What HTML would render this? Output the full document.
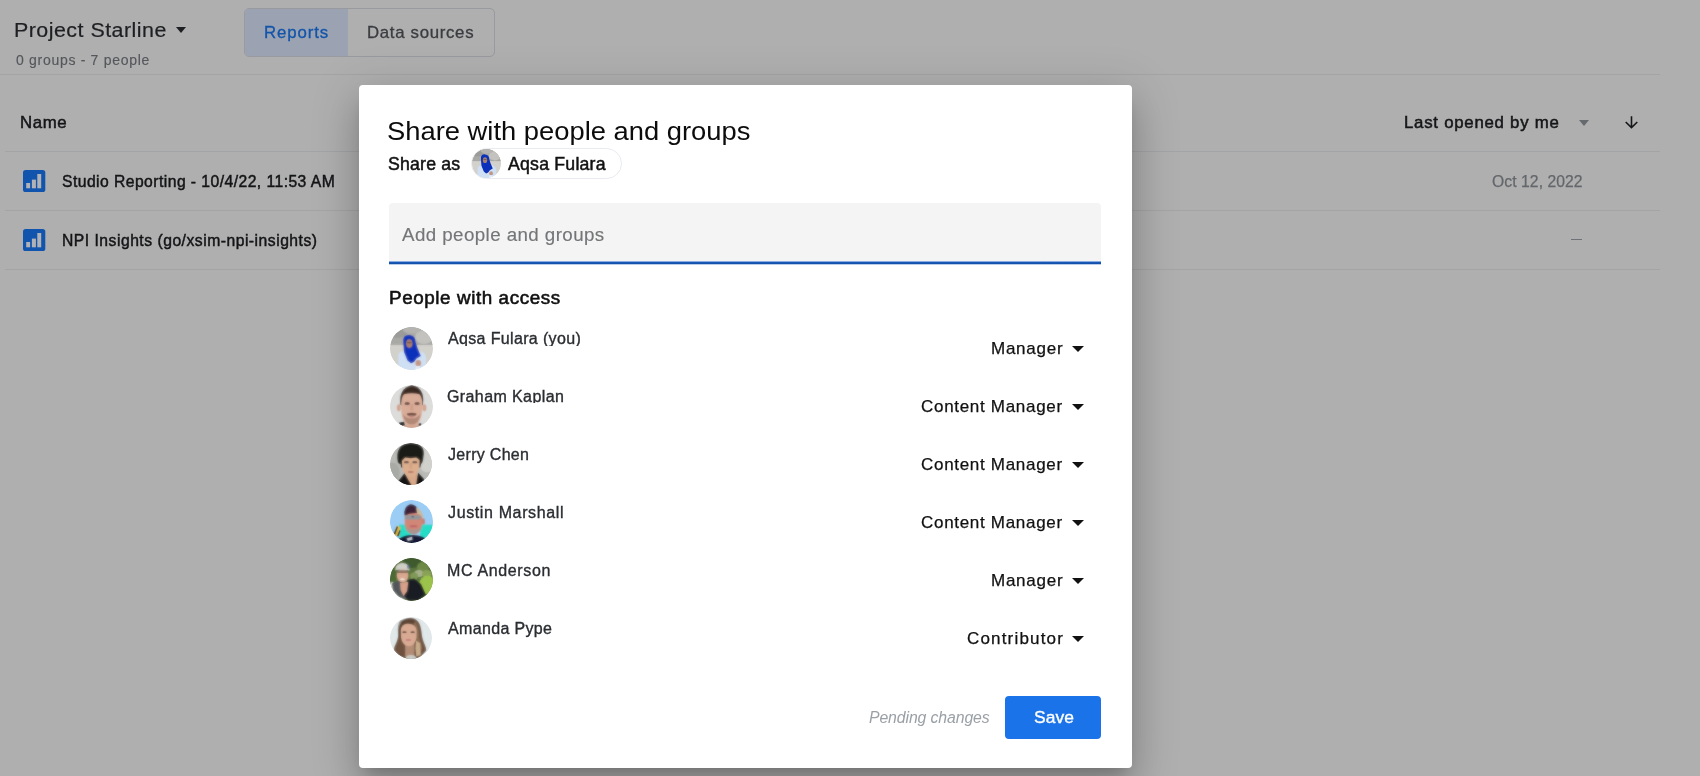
<!DOCTYPE html>
<html lang="en">
<head>
<meta charset="utf-8">
<title>Share with people and groups</title>
<style>
  html, body { margin: 0; padding: 0; }
  body {
    width: 1700px; height: 776px; overflow: hidden; position: relative;
    background: #afafaf;
    font-family: "Liberation Sans", sans-serif;
  }
  .t { position: absolute; white-space: nowrap; line-height: 1; will-change: transform; transform-origin: 0 50%; }
  .hline { position: absolute; height: 1px; background: #a3a4a6; left: 5px; width: 1655px; }
  .tri { position: absolute; width: 0; height: 0; border-left: 6px solid transparent; border-right: 6px solid transparent; border-top: 6px solid #111; }
  .ico { position: absolute; left: 22.9px; }
  #tabs { position: absolute; left: 244px; top: 8px; width: 248.5px; height: 46.6px; border: 1px solid #989a9f; border-radius: 5px; overflow: hidden; }
  #tab1 { position: absolute; left: 0; top: 0; width: 103px; height: 47px; background: #9ba3b2; }
  #dlg {
    position: absolute; left: 359px; top: 85px; width: 773px; height: 683px;
    background: #fff; border-radius: 4px;
    box-shadow: 0 11px 15px -7px rgba(0,0,0,.2), 0 24px 38px 3px rgba(0,0,0,.14), 0 9px 46px 8px rgba(0,0,0,.12);
  }
  #chip { position: absolute; left: 471px; top: 148px; width: 148.6px; height: 29px; border: 1px solid #e8ebf0; border-radius: 16px; }
  #inline { position: absolute; left: 389px; top: 261px; width: 712px; height: 4px; background: linear-gradient(to bottom, rgba(21,84,178,0) 0px, #2a6bc9 0.9px, #1554b2 1.6px, #134fa9 3px, rgba(21,84,178,0) 3.7px); }
  #input { position: absolute; left: 389px; top: 203px; width: 712px; height: 58px; background: #f4f4f4; border-radius: 4px 4px 0 0; }
  .av { position: absolute; border-radius: 50%; overflow: hidden; }
  #save { position: absolute; left: 1005.3px; top: 695.7px; width: 96.1px; height: 43.1px; background: #1a73e8; border-radius: 4px; }
</style>
</head>
<body>

<!-- background page (dimmed by scrim) -->

<div class="t" id="proj" style="left:14px;top:20px;font-size:20px;letter-spacing:0.45px;color:#1d1f22;-webkit-text-stroke:0.2px #1d1f22;transform:scaleX(1.07);">Project Starline</div>
<div class="tri" style="left:175.6px;top:27.3px;border-left-width:5.6px;border-right-width:5.6px;border-top:6.6px solid #1d1f22;"></div>
<div class="t" id="projsub" style="left:16px;top:53px;font-size:14px;letter-spacing:0.7px;color:#54575b;-webkit-text-stroke:0.15px #54575b;">0 groups - 7 people</div>
<div id="tabs"><div id="tab1"></div></div>
<div class="t" id="tab1t" style="left:264px;top:25px;font-size:15.7px;letter-spacing:0.85px;color:#1254aa;-webkit-text-stroke:0.3px #1254aa;transform:scaleX(1.07);">Reports</div>
<div class="t" id="tab2t" style="left:367px;top:25px;font-size:15.7px;letter-spacing:0.65px;color:#3a3c40;-webkit-text-stroke:0.3px #3a3c40;transform:scaleX(1.07);">Data sources</div>
<div class="hline" style="top:74px;left:0;width:1660px;"></div>
<div class="t" id="thname" style="left:20px;top:115px;font-size:15.7px;letter-spacing:0.6px;color:#151618;-webkit-text-stroke:0.5px #151618;transform:scaleX(1.07);">Name</div>
<div class="t" id="thlast" style="left:1404px;top:115px;font-size:15.7px;letter-spacing:0.7px;color:#151618;-webkit-text-stroke:0.5px #151618;transform:scaleX(1.07);">Last opened by me</div>
<div class="tri" style="left:1578.6px;top:119.9px;border-left-width:5.5px;border-right-width:5.5px;border-top:6.2px solid #66696d;"></div>
<svg style="position:absolute;left:1621.7px;top:113px" width="19" height="19" viewBox="0 0 24 24"><path d="M20 12l-1.41-1.41L13 16.17V4h-2v12.17l-5.58-5.59L4 12l8 8 8-8z" fill="#151618"/></svg>
<div class="hline" style="top:151px;"></div>
<div class="hline" style="top:210px;"></div>
<div class="hline" style="top:269px;"></div>
<svg class="ico" style="top:169.8px" width="23" height="23" viewBox="0 0 23 23"><rect x="0" y="0" width="22.3" height="22.1" rx="2.6" fill="#1154ae"/><rect x="3.2" y="13" width="3.9" height="5.3" fill="#b1b2b5"/><rect x="8.9" y="9.6" width="4" height="8.7" fill="#b1b2b5"/><rect x="14.3" y="4" width="3.9" height="14.3" fill="#b1b2b5"/></svg>
<div class="t" id="row1t" style="left:62px;top:174px;font-size:15.7px;letter-spacing:0.45px;color:#131416;-webkit-text-stroke:0.45px #131416;">Studio Reporting - 10/4/22, 11:53 AM</div>
<div class="t" id="date1" style="left:1492px;top:174px;font-size:15.7px;letter-spacing:0.07px;color:#63676b;-webkit-text-stroke:0.25px #63676b;">Oct 12, 2022</div>
<svg class="ico" style="top:228.8px" width="23" height="23" viewBox="0 0 23 23"><rect x="0" y="0" width="22.3" height="22.1" rx="2.6" fill="#1154ae"/><rect x="3.2" y="13" width="3.9" height="5.3" fill="#b1b2b5"/><rect x="8.9" y="9.6" width="4" height="8.7" fill="#b1b2b5"/><rect x="14.3" y="4" width="3.9" height="14.3" fill="#b1b2b5"/></svg>
<div class="t" id="row2t" style="left:62px;top:233px;font-size:15.7px;letter-spacing:0.5px;color:#131416;-webkit-text-stroke:0.45px #131416;">NPI Insights (go/xsim-npi-insights)</div>
<div style="position:absolute;left:1571.2px;top:238.7px;width:10.8px;height:1.7px;background:#6f7276;"></div>

<!-- dialog -->
<div id="dlg"></div>
<div class="t" id="title" style="left:387px;top:118px;font-size:26px;letter-spacing:0.0px;color:#0c0c0d;transform:scaleX(1.052);">Share with people and groups</div>
<div class="t" id="shareas" style="left:388px;top:156px;font-size:17.7px;letter-spacing:0.2px;color:#111;-webkit-text-stroke:0.5px #111;">Share as</div>
<div id="chip"></div>
<div class="t" id="chipname" style="left:508px;top:156px;font-size:17.7px;letter-spacing:0.22px;color:#111;-webkit-text-stroke:0.5px #111;">Aqsa Fulara</div>
<div id="input"></div><div id="inline"></div>
<div class="t" id="ph" style="left:402px;top:227px;font-size:17.5px;letter-spacing:0.4px;color:#737577;-webkit-text-stroke:0.15px #737577;transform:scaleX(1.07);">Add people and groups</div>
<div class="t" id="pwa" style="left:389px;top:290px;font-size:17.6px;letter-spacing:0.55px;color:#111;-webkit-text-stroke:0.55px #111;transform:scaleX(1.07);">People with access</div>
<div class="t" id="nm1" style="left:448px;top:331px;font-size:16px;letter-spacing:0.35px;color:#2a2d31;-webkit-text-stroke:0.35px #2a2d31;height:15px;overflow:hidden;">Aqsa Fulara (you)</div>
<div class="t" id="role1" style="left:991px;top:341px;font-size:15.9px;letter-spacing:0.7px;color:#111;-webkit-text-stroke:0.25px #111;transform:scaleX(1.07);">Manager</div>
<div class="tri" style="left:1072px;top:346px;border-left-width:6.0px;border-right-width:6.0px;border-top:6px solid #111;"></div>
<div class="t" id="nm2" style="left:447px;top:389px;font-size:16px;letter-spacing:0.4px;color:#2a2d31;-webkit-text-stroke:0.35px #2a2d31;height:14px;overflow:hidden;">Graham Kaplan</div>
<div class="t" id="role2" style="left:921px;top:399px;font-size:15.9px;letter-spacing:0.65px;color:#111;-webkit-text-stroke:0.25px #111;transform:scaleX(1.07);">Content Manager</div>
<div class="tri" style="left:1072px;top:404px;border-left-width:6.0px;border-right-width:6.0px;border-top:6px solid #111;"></div>
<div class="t" id="nm3" style="left:448px;top:447px;font-size:16px;letter-spacing:0.3px;color:#2a2d31;-webkit-text-stroke:0.35px #2a2d31;">Jerry Chen</div>
<div class="t" id="role3" style="left:921px;top:457px;font-size:15.9px;letter-spacing:0.65px;color:#111;-webkit-text-stroke:0.25px #111;transform:scaleX(1.07);">Content Manager</div>
<div class="tri" style="left:1072px;top:462px;border-left-width:6.0px;border-right-width:6.0px;border-top:6px solid #111;"></div>
<div class="t" id="nm4" style="left:448px;top:505px;font-size:16px;letter-spacing:0.63px;color:#2a2d31;-webkit-text-stroke:0.35px #2a2d31;">Justin Marshall</div>
<div class="t" id="role4" style="left:921px;top:515px;font-size:15.9px;letter-spacing:0.65px;color:#111;-webkit-text-stroke:0.25px #111;transform:scaleX(1.07);">Content Manager</div>
<div class="tri" style="left:1072px;top:520px;border-left-width:6.0px;border-right-width:6.0px;border-top:6px solid #111;"></div>
<div class="t" id="nm5" style="left:447px;top:563px;font-size:16px;letter-spacing:0.65px;color:#2a2d31;-webkit-text-stroke:0.35px #2a2d31;">MC Anderson</div>
<div class="t" id="role5" style="left:991px;top:573px;font-size:15.9px;letter-spacing:0.7px;color:#111;-webkit-text-stroke:0.25px #111;transform:scaleX(1.07);">Manager</div>
<div class="tri" style="left:1072px;top:578px;border-left-width:6.0px;border-right-width:6.0px;border-top:6px solid #111;"></div>
<div class="t" id="nm6" style="left:448px;top:621px;font-size:16px;letter-spacing:0.35px;color:#2a2d31;-webkit-text-stroke:0.35px #2a2d31;">Amanda Pype</div>
<div class="t" id="role6" style="left:967px;top:631px;font-size:15.9px;letter-spacing:1.1px;color:#111;-webkit-text-stroke:0.25px #111;transform:scaleX(1.07);">Contributor</div>
<div class="tri" style="left:1072px;top:636px;border-left-width:6.0px;border-right-width:6.0px;border-top:6px solid #111;"></div>
<svg class="av" id="av1" style="left:389.6px;top:326.9px" width="43" height="43" viewBox="0 0 43 43">
<defs><clipPath id="c1"><circle cx="21.5" cy="21.5" r="21.5"/></clipPath><filter id="b1" x="-10%" y="-10%" width="120%" height="120%"><feGaussianBlur stdDeviation="0.85"/></filter></defs>
<g clip-path="url(#c1)"><g>
<rect x="-3" y="-3" width="49" height="49" fill="#d3d1cb"/>
<rect x="-3" y="-3" width="49" height="21" fill="#a9a9a6"/>
<ellipse cx="34" cy="10" rx="9" ry="7" fill="#c3c2be"/>
<ellipse cx="8" cy="6" rx="9" ry="5" fill="#9b9b99"/>
<ellipse cx="22" cy="3" rx="9" ry="3.5" fill="#b4b3b0"/>
<path d="M8 46 L8.3 28 Q9.5 24.5 14 24 L30 24 Q35.5 25.5 36 31 L36.5 46 Z" fill="#d0e0f4"/>
<path d="M13.3 15 Q12.5 7.5 19.5 8 Q25.5 8.5 25.5 15 L27.5 21 L30.8 29 L26.5 31.5 L24 35 L21 36.2 L17.5 33.5 L14 25 Z" fill="#0b30bb"/>
<ellipse cx="19.3" cy="16.6" rx="3.2" ry="4.3" fill="#a8806d"/>
<ellipse cx="19.3" cy="15.6" rx="2.6" ry=".8" fill="#5e4438" opacity=".7"/>
<ellipse cx="28.3" cy="36.2" rx="2.8" ry="3.2" fill="#c29782"/>
<path d="M26 39 L30 39 L30 46 L25 46 Z" fill="#e6eefa"/>
</g><g filter="url(#b1)" opacity="0.6">
<rect x="-3" y="-3" width="49" height="49" fill="#d3d1cb"/>
<rect x="-3" y="-3" width="49" height="21" fill="#a9a9a6"/>
<ellipse cx="34" cy="10" rx="9" ry="7" fill="#c3c2be"/>
<ellipse cx="8" cy="6" rx="9" ry="5" fill="#9b9b99"/>
<ellipse cx="22" cy="3" rx="9" ry="3.5" fill="#b4b3b0"/>
<path d="M8 46 L8.3 28 Q9.5 24.5 14 24 L30 24 Q35.5 25.5 36 31 L36.5 46 Z" fill="#d0e0f4"/>
<path d="M13.3 15 Q12.5 7.5 19.5 8 Q25.5 8.5 25.5 15 L27.5 21 L30.8 29 L26.5 31.5 L24 35 L21 36.2 L17.5 33.5 L14 25 Z" fill="#0b30bb"/>
<ellipse cx="19.3" cy="16.6" rx="3.2" ry="4.3" fill="#a8806d"/>
<ellipse cx="19.3" cy="15.6" rx="2.6" ry=".8" fill="#5e4438" opacity=".7"/>
<ellipse cx="28.3" cy="36.2" rx="2.8" ry="3.2" fill="#c29782"/>
<path d="M26 39 L30 39 L30 46 L25 46 Z" fill="#e6eefa"/>
</g></g></svg>
<svg class="av" id="av2" style="left:389.6px;top:384.9px" width="43" height="43" viewBox="0 0 43 43">
<defs><clipPath id="c2"><circle cx="21.5" cy="21.5" r="21.5"/></clipPath><filter id="b2" x="-10%" y="-10%" width="120%" height="120%"><feGaussianBlur stdDeviation="0.85"/></filter></defs>
<g clip-path="url(#c2)"><g>
<rect x="-3" y="-3" width="49" height="49" fill="#dcdddb"/>
<path d="M10.4 19.5 Q8.5 3 21.7 0.3 Q35 2.5 33 19.5 L31.5 21 L12 21 Z" fill="#3a2a22"/>
<ellipse cx="8.8" cy="22.8" rx="2" ry="3.5" fill="#d2a48f"/>
<ellipse cx="34.4" cy="22.8" rx="2" ry="3.5" fill="#d2a48f"/>
<path d="M11.2 18 Q11.5 12 14 9.3 Q21.6 7 29.5 9.3 Q32 12 32.4 18 L32 27 Q31 36 26.5 40.5 L17 40.5 Q12 36 11.3 27 Z" fill="#d9ac98"/>
<path d="M12.8 29 Q14.5 38.8 21.7 40 Q29 38.8 30.6 29 Q27 33.5 21.7 33.5 Q16 33.5 12.8 29 Z" fill="#a98170" opacity=".85"/>
<ellipse cx="17.2" cy="18.6" rx="2.7" ry="1.5" fill="#6b4d43"/>
<ellipse cx="27.1" cy="18.6" rx="2.7" ry="1.5" fill="#6b4d43"/>
<path d="M20.8 19 L22.8 19 L23.6 25.5 L20 25.5 Z" fill="#cf9f8b"/>
<ellipse cx="21.7" cy="29.3" rx="4.8" ry="1.5" fill="#6d4b40"/>
<ellipse cx="21.7" cy="31.6" rx="2.8" ry="1.1" fill="#c98a82"/>
<path d="M15 39.5 L28.5 39.5 L31 46 L12 46 Z" fill="#d4a793"/>
<path d="M9.2 37.6 L14 36.8 L15 40.2 L9.8 41.6 Z" fill="#1c1c1c"/>
<path d="M28.7 38.6 L31.2 38.2 L31.2 40.6 L28.7 40.8 Z" fill="#1c1c1c"/>
</g><g filter="url(#b2)" opacity="0.6">
<rect x="-3" y="-3" width="49" height="49" fill="#dcdddb"/>
<path d="M10.4 19.5 Q8.5 3 21.7 0.3 Q35 2.5 33 19.5 L31.5 21 L12 21 Z" fill="#3a2a22"/>
<ellipse cx="8.8" cy="22.8" rx="2" ry="3.5" fill="#d2a48f"/>
<ellipse cx="34.4" cy="22.8" rx="2" ry="3.5" fill="#d2a48f"/>
<path d="M11.2 18 Q11.5 12 14 9.3 Q21.6 7 29.5 9.3 Q32 12 32.4 18 L32 27 Q31 36 26.5 40.5 L17 40.5 Q12 36 11.3 27 Z" fill="#d9ac98"/>
<path d="M12.8 29 Q14.5 38.8 21.7 40 Q29 38.8 30.6 29 Q27 33.5 21.7 33.5 Q16 33.5 12.8 29 Z" fill="#a98170" opacity=".85"/>
<ellipse cx="17.2" cy="18.6" rx="2.7" ry="1.5" fill="#6b4d43"/>
<ellipse cx="27.1" cy="18.6" rx="2.7" ry="1.5" fill="#6b4d43"/>
<path d="M20.8 19 L22.8 19 L23.6 25.5 L20 25.5 Z" fill="#cf9f8b"/>
<ellipse cx="21.7" cy="29.3" rx="4.8" ry="1.5" fill="#6d4b40"/>
<ellipse cx="21.7" cy="31.6" rx="2.8" ry="1.1" fill="#c98a82"/>
<path d="M15 39.5 L28.5 39.5 L31 46 L12 46 Z" fill="#d4a793"/>
<path d="M9.2 37.6 L14 36.8 L15 40.2 L9.8 41.6 Z" fill="#1c1c1c"/>
<path d="M28.7 38.6 L31.2 38.2 L31.2 40.6 L28.7 40.8 Z" fill="#1c1c1c"/>
</g></g></svg>
<svg class="av" id="av3" style="left:390.1px;top:442.7px" width="42" height="42" viewBox="0 0 43 43">
<defs><clipPath id="c3"><circle cx="21.5" cy="21.5" r="21.5"/></clipPath><filter id="b3" x="-10%" y="-10%" width="120%" height="120%"><feGaussianBlur stdDeviation="0.85"/></filter></defs>
<g clip-path="url(#c3)"><g>
<rect x="-3" y="-3" width="49" height="49" fill="#b9bab6"/>
<ellipse cx="38" cy="14" rx="10" ry="16" fill="#d0d0cd"/>
<ellipse cx="3" cy="30" rx="7" ry="10" fill="#a9aaa6"/>
<rect x="17" y="30" width="11" height="16" fill="#d8a889"/>
<path d="M7.5 46 L8.8 38.5 L14.8 31 L21.8 43 L21.8 46 Z" fill="#121312"/>
<path d="M28.8 30.5 L34.8 36.8 L34 46 L26.5 46 L27.5 38 Z" fill="#121312"/>
<path d="M8 19.5 Q4.5 1.5 21 0 Q37 0.5 34.2 14 Q34 19.5 31.8 21.5 L31 25 L11.5 25 L10.8 21.5 Q8.6 21.5 8 19.5 Z" fill="#1a1c19"/>
<path d="M12.2 18 Q12.5 13.5 21.3 14.2 Q30 13.5 30.4 18 L30.2 24 Q29.3 31 24.5 34 Q21.3 35.2 18 34 Q13.2 31 12.4 24 Z" fill="#dcae8e"/>
<path d="M12 18.5 L13.5 11.5 L20 10.5 L27 10.8 L30.8 18 L27 14.8 L21 15.6 L15.5 14.8 Z" fill="#1a1c19"/>
<ellipse cx="16.8" cy="19.6" rx="2.6" ry="1.2" fill="#6a5246"/>
<ellipse cx="25.4" cy="19.6" rx="2.6" ry="1.2" fill="#6a5246"/>
<path d="M20.3 20 L22.2 20 L23 26 L19.6 26 Z" fill="#d2a283"/>
<ellipse cx="21.2" cy="29.6" rx="3.1" ry="1" fill="#b9776a"/>
</g><g filter="url(#b3)" opacity="0.6">
<rect x="-3" y="-3" width="49" height="49" fill="#b9bab6"/>
<ellipse cx="38" cy="14" rx="10" ry="16" fill="#d0d0cd"/>
<ellipse cx="3" cy="30" rx="7" ry="10" fill="#a9aaa6"/>
<rect x="17" y="30" width="11" height="16" fill="#d8a889"/>
<path d="M7.5 46 L8.8 38.5 L14.8 31 L21.8 43 L21.8 46 Z" fill="#121312"/>
<path d="M28.8 30.5 L34.8 36.8 L34 46 L26.5 46 L27.5 38 Z" fill="#121312"/>
<path d="M8 19.5 Q4.5 1.5 21 0 Q37 0.5 34.2 14 Q34 19.5 31.8 21.5 L31 25 L11.5 25 L10.8 21.5 Q8.6 21.5 8 19.5 Z" fill="#1a1c19"/>
<path d="M12.2 18 Q12.5 13.5 21.3 14.2 Q30 13.5 30.4 18 L30.2 24 Q29.3 31 24.5 34 Q21.3 35.2 18 34 Q13.2 31 12.4 24 Z" fill="#dcae8e"/>
<path d="M12 18.5 L13.5 11.5 L20 10.5 L27 10.8 L30.8 18 L27 14.8 L21 15.6 L15.5 14.8 Z" fill="#1a1c19"/>
<ellipse cx="16.8" cy="19.6" rx="2.6" ry="1.2" fill="#6a5246"/>
<ellipse cx="25.4" cy="19.6" rx="2.6" ry="1.2" fill="#6a5246"/>
<path d="M20.3 20 L22.2 20 L23 26 L19.6 26 Z" fill="#d2a283"/>
<ellipse cx="21.2" cy="29.6" rx="3.1" ry="1" fill="#b9776a"/>
</g></g></svg>
<svg class="av" id="av4" style="left:389.6px;top:500.2px" width="43" height="43" viewBox="0 0 43 43">
<defs><clipPath id="c4"><circle cx="21.5" cy="21.5" r="21.5"/></clipPath><filter id="b4" x="-10%" y="-10%" width="120%" height="120%"><feGaussianBlur stdDeviation="0.85"/></filter></defs>
<g clip-path="url(#c4)"><g>
<rect x="-3" y="-3" width="49" height="49" fill="#9ccdf5"/>
<rect x="9" y="24.6" width="12" height="13" fill="#27dcc7"/>
<rect x="30" y="24.6" width="16" height="13" fill="#27dcc7"/>
<path d="M3 36 L6.5 26 L10.5 26.5 L9.5 36 Z" fill="#e3b840"/>
<path d="M3.5 34 L6.8 26.5 L8 26.8 L5.2 34.5 Z" fill="#1b1b1b"/>
<path d="M7 36 L9.5 30 L10.5 31 L8.5 36.5 Z" fill="#1b1b1b"/>
<ellipse cx="22.5" cy="45" rx="17.5" ry="10" fill="#171b35"/>
<path d="M16.5 38.5 L22 36.8 L22.5 39.5 L18 41 Z" fill="#c8c9d6"/>
<ellipse cx="33.3" cy="21.5" rx="1.6" ry="3.2" fill="#c67e6e"/>
<path d="M14.6 16 Q14.6 11 23.5 11 Q32.4 11 32.4 16 L32.2 25 Q31 34 23.6 34.2 Q16 34 14.8 25 Z" fill="#d18777"/>
<path d="M16 26 Q18 34.4 23.6 34.4 Q29.5 34.4 31.3 26 Q28 30 23.6 29.5 Q19 30 16 26 Z" fill="#a59892" opacity=".85"/>
<ellipse cx="23.5" cy="26.3" rx="4" ry="1.2" fill="#c0696a"/>
<path d="M14.6 15.5 Q13 7 20 4.3 Q25 4.5 27.5 8 L27.5 13 Q20 12.5 14.6 15.5 Z" fill="#3c2238"/>
<path d="M26 7.3 Q31.5 8.5 33.2 16.5 L33.5 19 L30 15 L27 13.5 Z" fill="#c9b99f"/>
<rect x="15" y="15.2" width="15.8" height="4.2" rx="1.5" fill="#8b979d" opacity=".92"/>
<rect x="21.7" y="16" width="2" height="1.3" fill="#4d5a66"/>
</g><g filter="url(#b4)" opacity="0.6">
<rect x="-3" y="-3" width="49" height="49" fill="#9ccdf5"/>
<rect x="9" y="24.6" width="12" height="13" fill="#27dcc7"/>
<rect x="30" y="24.6" width="16" height="13" fill="#27dcc7"/>
<path d="M3 36 L6.5 26 L10.5 26.5 L9.5 36 Z" fill="#e3b840"/>
<path d="M3.5 34 L6.8 26.5 L8 26.8 L5.2 34.5 Z" fill="#1b1b1b"/>
<path d="M7 36 L9.5 30 L10.5 31 L8.5 36.5 Z" fill="#1b1b1b"/>
<ellipse cx="22.5" cy="45" rx="17.5" ry="10" fill="#171b35"/>
<path d="M16.5 38.5 L22 36.8 L22.5 39.5 L18 41 Z" fill="#c8c9d6"/>
<ellipse cx="33.3" cy="21.5" rx="1.6" ry="3.2" fill="#c67e6e"/>
<path d="M14.6 16 Q14.6 11 23.5 11 Q32.4 11 32.4 16 L32.2 25 Q31 34 23.6 34.2 Q16 34 14.8 25 Z" fill="#d18777"/>
<path d="M16 26 Q18 34.4 23.6 34.4 Q29.5 34.4 31.3 26 Q28 30 23.6 29.5 Q19 30 16 26 Z" fill="#a59892" opacity=".85"/>
<ellipse cx="23.5" cy="26.3" rx="4" ry="1.2" fill="#c0696a"/>
<path d="M14.6 15.5 Q13 7 20 4.3 Q25 4.5 27.5 8 L27.5 13 Q20 12.5 14.6 15.5 Z" fill="#3c2238"/>
<path d="M26 7.3 Q31.5 8.5 33.2 16.5 L33.5 19 L30 15 L27 13.5 Z" fill="#c9b99f"/>
<rect x="15" y="15.2" width="15.8" height="4.2" rx="1.5" fill="#8b979d" opacity=".92"/>
<rect x="21.7" y="16" width="2" height="1.3" fill="#4d5a66"/>
</g></g></svg>
<svg class="av" id="av5" style="left:389.6px;top:558.1px" width="43" height="43" viewBox="0 0 43 43">
<defs><clipPath id="c5"><circle cx="21.5" cy="21.5" r="21.5"/></clipPath><filter id="b5" x="-10%" y="-10%" width="120%" height="120%"><feGaussianBlur stdDeviation="0.85"/></filter></defs>
<g clip-path="url(#c5)"><g>
<rect x="-3" y="-3" width="49" height="49" fill="#5b753f"/>
<ellipse cx="22" cy="4" rx="9" ry="6" fill="#3f5a2f"/>
<ellipse cx="33" cy="9" rx="6" ry="5" fill="#6f8a48"/>
<ellipse cx="29" cy="15.5" rx="5" ry="3.5" fill="#a7b08a"/>
<ellipse cx="37" cy="16" rx="5" ry="4" fill="#89a257"/>
<ellipse cx="37.5" cy="27" rx="8.5" ry="9.5" fill="#9cc24b"/>
<ellipse cx="24" cy="18" rx="4" ry="3.5" fill="#7f9a58"/>
<ellipse cx="2" cy="18" rx="4.5" ry="8" fill="#4d6b35"/>
<path d="M-3 25 L3 24 L6 34 L14 41 L20 46 L-3 46 Z" fill="#dadad6"/>
<path d="M1.8 25.5 L8 22.8 L14 24 L17 42 L8.5 38.5 L3.2 32.5 Z" fill="#53575a"/>
<path d="M17.5 22 L24 20.5 L31 26 L35.8 36.5 L28 42.5 L18 42.5 L14 37 Z" fill="#1b1f25"/>
<path d="M10 25 L18.3 23.8 L17.2 33 L13.6 38.2 L10.6 32 Z" fill="#d6a08b"/>
<ellipse cx="12.6" cy="17.5" rx="5.8" ry="7" fill="#d9a88f"/>
<ellipse cx="12.4" cy="21.3" rx="2.4" ry="1" fill="#f1e7e1"/>

<path d="M5.3 12 Q5.5 5 12.5 5 Q19.5 5.2 19.6 12.6 L12 11.5 Z" fill="#d0d0c7"/>
<ellipse cx="18.4" cy="8.8" rx="1.4" ry="2.2" fill="#5b6a8a" opacity=".7"/>
<rect x="7.2" y="12.4" width="10.6" height="2.6" fill="#6b5a4e" opacity=".75"/>
</g><g filter="url(#b5)" opacity="0.6">
<rect x="-3" y="-3" width="49" height="49" fill="#5b753f"/>
<ellipse cx="22" cy="4" rx="9" ry="6" fill="#3f5a2f"/>
<ellipse cx="33" cy="9" rx="6" ry="5" fill="#6f8a48"/>
<ellipse cx="29" cy="15.5" rx="5" ry="3.5" fill="#a7b08a"/>
<ellipse cx="37" cy="16" rx="5" ry="4" fill="#89a257"/>
<ellipse cx="37.5" cy="27" rx="8.5" ry="9.5" fill="#9cc24b"/>
<ellipse cx="24" cy="18" rx="4" ry="3.5" fill="#7f9a58"/>
<ellipse cx="2" cy="18" rx="4.5" ry="8" fill="#4d6b35"/>
<path d="M-3 25 L3 24 L6 34 L14 41 L20 46 L-3 46 Z" fill="#dadad6"/>
<path d="M1.8 25.5 L8 22.8 L14 24 L17 42 L8.5 38.5 L3.2 32.5 Z" fill="#53575a"/>
<path d="M17.5 22 L24 20.5 L31 26 L35.8 36.5 L28 42.5 L18 42.5 L14 37 Z" fill="#1b1f25"/>
<path d="M10 25 L18.3 23.8 L17.2 33 L13.6 38.2 L10.6 32 Z" fill="#d6a08b"/>
<ellipse cx="12.6" cy="17.5" rx="5.8" ry="7" fill="#d9a88f"/>
<ellipse cx="12.4" cy="21.3" rx="2.4" ry="1" fill="#f1e7e1"/>

<path d="M5.3 12 Q5.5 5 12.5 5 Q19.5 5.2 19.6 12.6 L12 11.5 Z" fill="#d0d0c7"/>
<ellipse cx="18.4" cy="8.8" rx="1.4" ry="2.2" fill="#5b6a8a" opacity=".7"/>
<rect x="7.2" y="12.4" width="10.6" height="2.6" fill="#6b5a4e" opacity=".75"/>
</g></g></svg>
<svg class="av" id="av6" style="left:390.1px;top:616.9px" width="42" height="42" viewBox="0 0 43 43">
<defs><clipPath id="c6"><circle cx="21.5" cy="21.5" r="21.5"/></clipPath><filter id="b6" x="-10%" y="-10%" width="120%" height="120%"><feGaussianBlur stdDeviation="0.85"/></filter></defs>
<g clip-path="url(#c6)"><g>
<rect x="-3" y="-3" width="49" height="49" fill="#e2e8e9"/>
<path d="M20.5 1 C11 1 8.7 10 8.6 17 C8.4 26 3.2 30 4.3 34.5 L9.5 40.5 L18 43.5 L26 43.5 L31.5 40.5 L37 34.5 C37.5 30 33.2 26 32.5 17 C31.5 8 29.5 1 20.5 1 Z" fill="#6e523f"/>
<path d="M24 3 C29 6 30 14 30.5 22 L33 31 L31 39 L27 40 L27 24 Z" fill="#8a6c54"/>
<ellipse cx="12" cy="13" rx="4" ry="10" fill="#4d382b" opacity=".55"/>
<ellipse cx="19" cy="4.5" rx="7" ry="3" fill="#4d382b" opacity=".5"/>
<path d="M26.6 24 L31 27 L31.4 39 L27 40.5 L26 32 Z" fill="#c8ac8b"/>
<rect x="15.5" y="27" width="9.5" height="14" fill="#b38c77"/>
<ellipse cx="21.5" cy="42" rx="5.3" ry="3.2" fill="#c9cbc4"/>
<path d="M11 14 Q11.5 6.5 18.5 6.8 Q26.5 7 27.3 14 L27.2 21 Q26 29 19.3 30 Q12.5 29 11.2 21 Z" fill="#d9ab93"/>
<ellipse cx="14.8" cy="15.5" rx="2.2" ry=".9" fill="#5b463c"/>
<ellipse cx="23.2" cy="15.5" rx="2.2" ry=".9" fill="#5b463c"/>
<ellipse cx="18.8" cy="23.6" rx="3.1" ry="1" fill="#c47f80"/>
</g><g filter="url(#b6)" opacity="0.6">
<rect x="-3" y="-3" width="49" height="49" fill="#e2e8e9"/>
<path d="M20.5 1 C11 1 8.7 10 8.6 17 C8.4 26 3.2 30 4.3 34.5 L9.5 40.5 L18 43.5 L26 43.5 L31.5 40.5 L37 34.5 C37.5 30 33.2 26 32.5 17 C31.5 8 29.5 1 20.5 1 Z" fill="#6e523f"/>
<path d="M24 3 C29 6 30 14 30.5 22 L33 31 L31 39 L27 40 L27 24 Z" fill="#8a6c54"/>
<ellipse cx="12" cy="13" rx="4" ry="10" fill="#4d382b" opacity=".55"/>
<ellipse cx="19" cy="4.5" rx="7" ry="3" fill="#4d382b" opacity=".5"/>
<path d="M26.6 24 L31 27 L31.4 39 L27 40.5 L26 32 Z" fill="#c8ac8b"/>
<rect x="15.5" y="27" width="9.5" height="14" fill="#b38c77"/>
<ellipse cx="21.5" cy="42" rx="5.3" ry="3.2" fill="#c9cbc4"/>
<path d="M11 14 Q11.5 6.5 18.5 6.8 Q26.5 7 27.3 14 L27.2 21 Q26 29 19.3 30 Q12.5 29 11.2 21 Z" fill="#d9ab93"/>
<ellipse cx="14.8" cy="15.5" rx="2.2" ry=".9" fill="#5b463c"/>
<ellipse cx="23.2" cy="15.5" rx="2.2" ry=".9" fill="#5b463c"/>
<ellipse cx="18.8" cy="23.6" rx="3.1" ry="1" fill="#c47f80"/>
</g></g></svg>
<svg class="av" id="av7" style="left:471.5px;top:148.9px" width="29" height="29" viewBox="0 0 43 43">
<defs><clipPath id="c7"><circle cx="21.5" cy="21.5" r="21.5"/></clipPath><filter id="b7" x="-10%" y="-10%" width="120%" height="120%"><feGaussianBlur stdDeviation="1.0"/></filter></defs>
<g clip-path="url(#c7)"><g>
<rect x="-3" y="-3" width="49" height="49" fill="#d3d1cb"/>
<rect x="-3" y="-3" width="49" height="21" fill="#a9a9a6"/>
<ellipse cx="34" cy="10" rx="9" ry="7" fill="#c3c2be"/>
<ellipse cx="8" cy="6" rx="9" ry="5" fill="#9b9b99"/>
<ellipse cx="22" cy="3" rx="9" ry="3.5" fill="#b4b3b0"/>
<path d="M8 46 L8.3 28 Q9.5 24.5 14 24 L30 24 Q35.5 25.5 36 31 L36.5 46 Z" fill="#d0e0f4"/>
<path d="M13.3 15 Q12.5 7.5 19.5 8 Q25.5 8.5 25.5 15 L27.5 21 L30.8 29 L26.5 31.5 L24 35 L21 36.2 L17.5 33.5 L14 25 Z" fill="#0b30bb"/>
<ellipse cx="19.3" cy="16.6" rx="3.2" ry="4.3" fill="#a8806d"/>
<ellipse cx="19.3" cy="15.6" rx="2.6" ry=".8" fill="#5e4438" opacity=".7"/>
<ellipse cx="28.3" cy="36.2" rx="2.8" ry="3.2" fill="#c29782"/>
<path d="M26 39 L30 39 L30 46 L25 46 Z" fill="#e6eefa"/>
</g><g filter="url(#b7)" opacity="0.6">
<rect x="-3" y="-3" width="49" height="49" fill="#d3d1cb"/>
<rect x="-3" y="-3" width="49" height="21" fill="#a9a9a6"/>
<ellipse cx="34" cy="10" rx="9" ry="7" fill="#c3c2be"/>
<ellipse cx="8" cy="6" rx="9" ry="5" fill="#9b9b99"/>
<ellipse cx="22" cy="3" rx="9" ry="3.5" fill="#b4b3b0"/>
<path d="M8 46 L8.3 28 Q9.5 24.5 14 24 L30 24 Q35.5 25.5 36 31 L36.5 46 Z" fill="#d0e0f4"/>
<path d="M13.3 15 Q12.5 7.5 19.5 8 Q25.5 8.5 25.5 15 L27.5 21 L30.8 29 L26.5 31.5 L24 35 L21 36.2 L17.5 33.5 L14 25 Z" fill="#0b30bb"/>
<ellipse cx="19.3" cy="16.6" rx="3.2" ry="4.3" fill="#a8806d"/>
<ellipse cx="19.3" cy="15.6" rx="2.6" ry=".8" fill="#5e4438" opacity=".7"/>
<ellipse cx="28.3" cy="36.2" rx="2.8" ry="3.2" fill="#c29782"/>
<path d="M26 39 L30 39 L30 46 L25 46 Z" fill="#e6eefa"/>
</g></g></svg>
<div id="save"></div>
<div class="t" id="savet" style="left:1034px;top:709px;font-size:16.3px;letter-spacing:0.05px;color:#fff;-webkit-text-stroke:0.35px #fff;transform:scaleX(1.07);">Save</div>
<div class="t" id="pend" style="left:869px;top:710px;font-size:15.8px;letter-spacing:-0.1px;color:#9aa0a6;font-style:italic;">Pending changes</div>

</body>
</html>
